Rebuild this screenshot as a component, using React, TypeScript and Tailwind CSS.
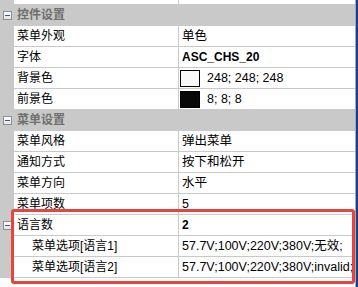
import React from 'react';

const font = 'font-["Liberation_Sans","Noto_Sans_CJK_SC",sans-serif]';

const MinusBox = () => (
  <div className="w-[9px] h-[9px] border border-[#8e8f8f] bg-gradient-to-b from-white to-[#e4e4e4] flex items-center justify-center">
    <div className="w-[5px] h-px bg-[#3b5b8a]" />
  </div>
);

const Header = ({ title }: { title: string }) => (
  <div className="flex h-[21px] bg-[#c9c9c9] border-b border-[#c9c9c9] items-center">
    <div className="w-[14px] flex justify-center">
      <MinusBox />
    </div>
    <span className="pl-[3px] text-[12px] font-bold text-[#6f6f6f]">{title}</span>
  </div>
);

type RowProps = {
  label: string;
  value?: React.ReactNode;
  bold?: boolean;
  indent?: boolean;
  toggle?: boolean;
};

const Row = ({ label, value, bold, indent, toggle }: RowProps) => (
  <div className="flex h-[21px] border-b border-[#c9c9c9] text-[12px] text-black">
    <div className="w-[14px] bg-[#c9c9c9] flex items-center justify-center">
      {toggle && <MinusBox />}
    </div>
    <div className={`w-[165px] border-r border-[#c9c9c9] flex items-center ${indent ? 'pl-[18px]' : 'pl-[3px]'}`}>
      {label}
    </div>
    <div className={`flex-1 flex items-center pl-[3px] whitespace-nowrap overflow-hidden ${bold ? 'font-bold' : 'text-[12.5px]'}`}>
      {value}
    </div>
  </div>
);

const Swatch = ({ color, text }: { color: string; text: string }) => (
  <div className="flex items-center -ml-[2px]">
    <div className="w-[20px] h-[17px] border border-black" style={{ backgroundColor: color }} />
    <span className="ml-[7px]">{text}</span>
  </div>
);

export default function App() {
  return (
    <div className={`relative w-[358px] h-[287px] bg-white flex overflow-hidden ${font}`}>
      <div className="w-[355px] flex flex-col">
        <div className="flex h-[5px] border-b border-[#c9c9c9]">
          <div className="w-[14px] bg-[#c9c9c9]" />
          <div className="w-[165px] border-r border-[#c9c9c9]" />
        </div>
        <Header title="控件设置" />
        <Row label="菜单外观" value="单色" />
        <Row label="字体" value="ASC_CHS_20" bold />
        <Row label="背景色" value={<Swatch color="#f8f8f8" text="248; 248; 248" />} />
        <Row label="前景色" value={<Swatch color="#080808" text="8; 8; 8" />} />
        <Header title="菜单设置" />
        <Row label="菜单风格" value="弹出菜单" />
        <Row label="通知方式" value="按下和松开" />
        <Row label="菜单方向" value="水平" />
        <Row label="菜单项数" value="5" />
        <Row label="语言数" value="2" bold toggle />
        <Row label="菜单选项[语言1]" value="57.7V;100V;220V;380V;无效;" indent />
        <Row label="菜单选项[语言2]" value="57.7V;100V;220V;380V;invalid;" indent />
        <div className="flex-1 bg-white" />
      </div>
      <div className="w-px bg-[#a9a9a9]" />
      <div className="w-[2px] bg-[#1b3c8f]" />
      <div className="absolute left-[11px] top-[209px] w-[344px] h-[75px] border-[3px] border-[#e5443f] rounded-[3px]" />
    </div>
  );
}
